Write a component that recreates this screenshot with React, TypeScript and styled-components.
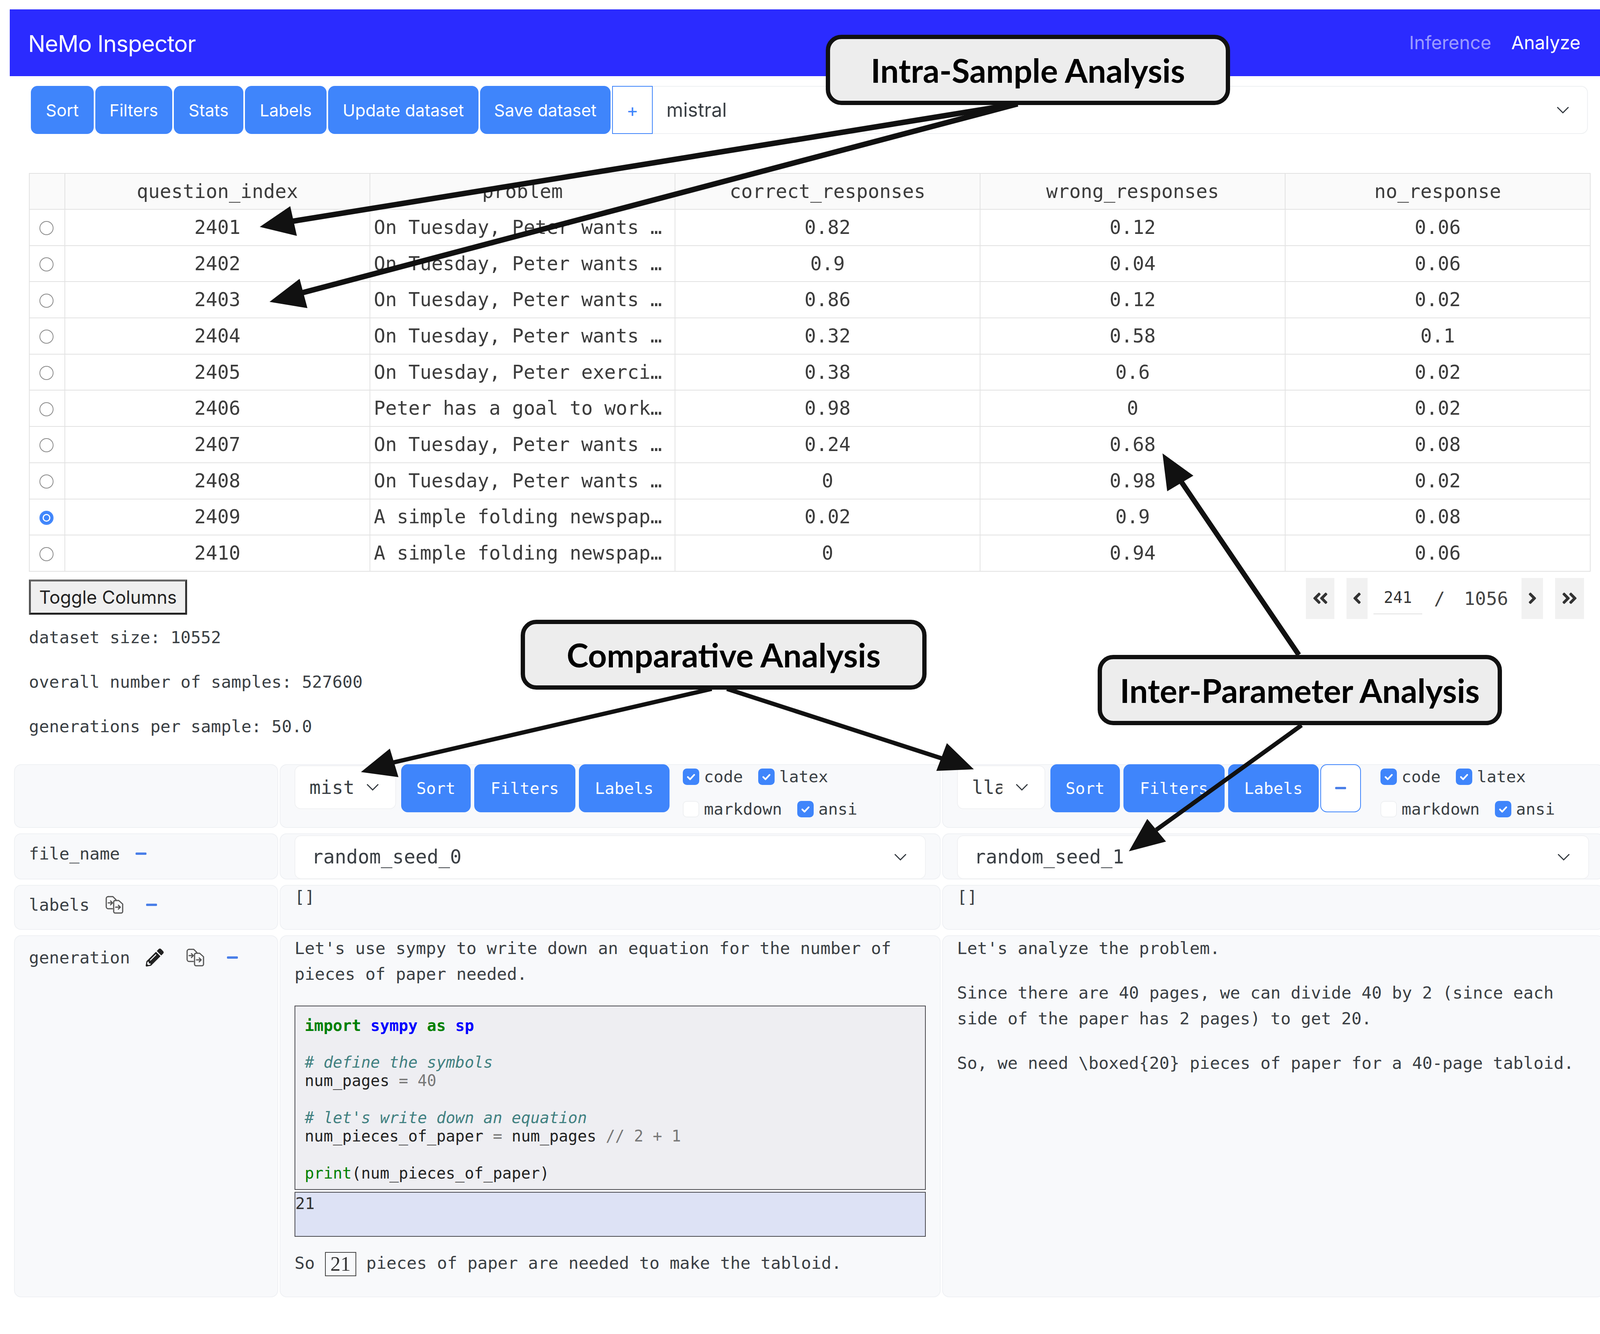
import React from "react";
import styled, { createGlobalStyle } from "styled-components";
import { FaAngleDoubleLeft, FaAngleDoubleRight, FaAngleLeft, FaAngleRight, FaPencilAlt } from "react-icons/fa";

const MONO = `"DejaVu Sans Mono", "Liberation Mono", monospace`;
const SANS = `Inter, "Liberation Sans", sans-serif`;
const BLUE = "#3f85fb";

const GlobalStyle = createGlobalStyle`
  html, body { margin: 0; padding: 0; background: #fff; }
  * { box-sizing: border-box; }
`;

const Page = styled.div`
  position: relative;
  width: 4140px;
  height: 3416px;
  padding-top: 24px;
  overflow: hidden;
  background: #fff;
  font-family: ${MONO};
  color: #3a3f44;
`;

const Navbar = styled.nav`
  display: flex;
  align-items: center;
  justify-content: space-between;
  height: 171px;
  margin: 0 30px 0 25px;
  padding: 0 64px 0 47px;
  background: #2b2bff;
  font-family: ${SANS};
`;
const Brand = styled.div`
  color: #fff;
  font-size: 58.5px;
  letter-spacing: -1px;
  margin-top: 4px;
`;
const NavLinks = styled.div`
  display: flex;
  gap: 51px;
  margin-top: -3px;
`;
const NavLink = styled.a<{ $active?: boolean }>`
  color: ${(p) => (p.$active ? "#fff" : "rgba(255,255,255,0.55)")};
  font-size: 47px;
`;

const Toolbar = styled.div`
  display: flex;
  height: 123px;
  margin: 25px 75px 0 79px;
  gap: 4px;
`;
const Button = styled.button<{ $w: number }>`
  flex: none;
  width: ${(p) => p.$w}px;
  height: 123px;
  padding: 0;
  border: 0;
  border-radius: 17px;
  background: ${BLUE};
  color: #fff;
  font-family: ${SANS};
  font-size: 43px;
  white-space: nowrap;
`;
const PlusButton = styled.button`
  flex: none;
  width: 104px;
  height: 123px;
  border: 2px solid ${BLUE};
  background: #fff;
  color: ${BLUE};
  font-family: ${SANS};
  font-size: 46px;
`;
const TopSelect = styled.div`
  flex: 1;
  display: flex;
  align-items: center;
  justify-content: space-between;
  margin-left: -4px;
  padding: 0 44px 0 35px;
  border: 2px solid #eef0f2;
  border-left: 0;
  border-radius: 0 17px 17px 0;
  font-family: ${SANS};
  font-size: 49px;
  color: #3a3f44;
`;
const Chevron = () => (
  <svg width="36" height="36" viewBox="0 0 16 16" fill="none" stroke="#343a40" strokeWidth="1.3" strokeLinecap="round">
    <path d="M2 5l6 6 6-6" />
  </svg>
);

const Table = styled.table`
  width: 3994px;
  margin: 100px 0 0 74px;
  border-collapse: collapse;
  table-layout: fixed;
  font-size: 49px;
  color: #3c3c3c;
`;
const HeadCell = styled.th<{ $narrow?: boolean }>`
  width: ${(p) => (p.$narrow ? "91px" : "781px")};
  height: 92px;
  padding: 0;
  border: 2px solid #e2e2e2;
  background: #fafafa;
  font-weight: 400;
  text-align: center;
`;
const Cell = styled.td<{ $left?: boolean }>`
  height: 92.7px;
  padding: 0 0 0 ${(p) => (p.$left ? "9px" : "0")};
  border: 2px solid #e2e2e2;
  text-align: ${(p) => (p.$left ? "left" : "center")};
  white-space: nowrap;
`;
const Radio = styled.input.attrs({ type: "radio" })`
  appearance: none;
  display: block;
  width: 36px;
  height: 36px;
  margin: 4px 0 0 25px;
  border: 2px solid #8b8b8b;
  border-radius: 50%;
  background: #fff;
  &:checked {
    border-color: ${BLUE};
    background: ${BLUE};
    box-shadow: inset 0 0 0 6px ${BLUE}, inset 0 0 0 9px #fff;
  }
`;

const TableFooter = styled.div`
  display: flex;
  justify-content: space-between;
  align-items: flex-start;
  height: 105px;
  margin-top: 16px;
  padding: 0 85px 0 74px;
`;
const ToggleButton = styled.button`
  width: 405px;
  height: 90px;
  margin-top: 4px;
  padding: 0;
  border: 5px solid;
  border-color: #666 #333 #222 #555;
  background: #efefef;
  color: #222;
  font-family: ${SANS};
  font-size: 46px;
`;
const Pager = styled.div`
  display: flex;
  align-items: center;
  height: 105px;
  font-size: 47px;
  color: #444;
`;
const PagerButton = styled.div<{ $w: number; $mr: number }>`
  display: flex;
  align-items: center;
  justify-content: center;
  width: ${(p) => p.$w}px;
  height: 105px;
  margin-right: ${(p) => p.$mr}px;
  background: #f1f1f1;
  color: #333;
  font-size: 46px;
`;
const PageInput = styled.div`
  width: 125px;
  height: 93px;
  margin: 0 30px 12px 0;
  padding-top: 27px;
  border-bottom: 2px solid #e0e0e0;
  text-align: center;
  font-size: 40px;
  color: #333;
`;
const PageTotal = styled.div`
  width: 224px;
  display: flex;
  justify-content: space-between;
  padding-right: 34px;
  white-space: nowrap;
`;

const Stats = styled.div`
  margin-top: 14px;
  padding-left: 74px;
  height: 358px;
`;
const Para = styled.p`
  margin: 0 0 48px;
  font-size: 43px;
  line-height: 66px;
`;

const CompareGrid = styled.div`
  display: grid;
  grid-template-columns: 676px 1692px 1694px;
  grid-template-rows: 163px 118px 115px 927px;
  column-gap: 4px;
  row-gap: 14px;
  margin-left: 36px;
`;
const Card = styled.div<{ $padTop?: number }>`
  padding: ${(p) => p.$padTop ?? 0}px 38px 0;
  box-shadow: inset 0 0 0 2px #eff1f4;
  border-radius: 18px;
  background: #f8f9fb;
  font-size: 43px;
  overflow: hidden;
`;
const ControlRow = styled(Card)`
  display: flex;
  align-items: flex-start;
`;
const ModelSelect = styled.div<{ $w: number }>`
  display: flex;
  align-items: center;
  flex: none;
  width: ${(p) => p.$w}px;
  height: 112px;
  margin: 3px 13px 0 0;
  padding: 0 40px 0 36px;
  justify-content: space-between;
  border: 2px solid #f0f1f3;
  border-radius: 16px;
  background: #fff;
  font-size: 48px;
`;
const ClipText = styled.span<{ $w: number }>`
  display: block;
  width: ${(p) => p.$w}px;
  overflow: hidden;
  white-space: nowrap;
`;
const MonoButton = styled(Button)`
  margin-right: 9px;
  font-family: ${MONO};
  font-size: 41.5px;
`;
const MinusButton = styled.button`
  flex: none;
  display: flex;
  align-items: center;
  justify-content: center;
  width: 104px;
  height: 123px;
  margin-left: -5px;
  border: 2px solid ${BLUE};
  border-radius: 17px;
  background: #fff;
  padding: 0;
`;
const MinusMark = styled.span`
  display: block;
  width: 28px;
  height: 6px;
  border-radius: 2px;
  background: #4a7fe8;
`;
const Checks = styled.div<{ $ml: number }>`
  flex: none;
  margin: 11px 0 0 ${(p) => p.$ml}px;
  font-size: 41.5px;
  line-height: 42px;
`;
const CheckRow = styled.div`
  display: flex;
  align-items: center;
  height: 42px;
  & + & {
    margin-top: 41px;
  }
`;
const Check = styled.label`
  display: flex;
  align-items: center;
  gap: 12px;
  margin-right: 39px;
`;
const Box = styled.span<{ $on?: boolean }>`
  display: flex;
  align-items: center;
  justify-content: center;
  width: 42px;
  height: 42px;
  border-radius: 10px;
  background: ${(p) => (p.$on ? BLUE : "#fff")};
  border: ${(p) => (p.$on ? "0" : "2px solid #eef0f2")};
`;
const CheckMark = () => (
  <svg width="26" height="26" viewBox="0 0 16 16" fill="none" stroke="#fff" strokeWidth="2.6" strokeLinecap="round" strokeLinejoin="round">
    <path d="M3 8.5l3.5 3.5L13 5" />
  </svg>
);
const Option = ({ on, children }: { on?: boolean; children: React.ReactNode }) => (
  <Check>
    <Box $on={on}>{on && <CheckMark />}</Box>
    {children}
  </Check>
);

const FieldSelect = styled.div`
  display: flex;
  align-items: center;
  justify-content: space-between;
  height: 112px;
  margin-top: 5px;
  padding: 0 45px 0 42px;
  border: 2px solid #f0f1f3;
  border-radius: 16px;
  background: #fff;
  font-size: 49px;
`;
const Brackets = styled.div`
  margin-top: 1px;
  font-size: 43px;
  line-height: 60px;
`;

const LabelRow = styled.div`
  display: flex;
  align-items: center;
  height: 66px;
`;
const LabelText = styled.span`
  margin-right: 40px;
`;
const IconSlot = styled.span`
  display: flex;
  align-items: center;
  color: #222;
  & + & {
    margin-left: 57px;
  }
`;
const CopyIcon = () => (
  <svg width="48" height="46" viewBox="0 0 48 46" fill="none" stroke="#555" strokeWidth="3" strokeLinejoin="round" strokeLinecap="round">
    <path d="M8 2h12l8 8v12" />
    <path d="M8 2a5 5 0 0 0-5 5v21a5 5 0 0 0 5 5h11" />
    <path d="M8 18h11M14 13l5 5-5 5" />
    <path d="M25 12h10l10 9v19a4 4 0 0 1-4 4H26a4 4 0 0 1-4-4V16a4 4 0 0 1 3-4z" fill="#f8f9fb" />
    <path d="M27 29h12M34 24l5 5-5 5" />
  </svg>
);

const CodeBox = styled.pre`
  margin: 0;
  height: 472px;
  padding: 26px 24px 0;
  border: 2px solid #4a4a4f;
  background: #eeeef2;
  font-family: ${MONO};
  font-size: 40px;
  line-height: 47.2px;
  color: #222;
`;
const Keyword = styled.span`
  color: #008000;
  font-weight: 700;
`;
const Module = styled.span`
  color: #0000ff;
  font-weight: 700;
`;
const Comment = styled.span`
  color: #408080;
  font-style: italic;
`;
const Operator = styled.span`
  color: #777;
`;
const Builtin = styled.span`
  color: #008000;
`;
const OutputBox = styled.pre`
  margin: 5px 0 34px;
  height: 115px;
  padding: 0;
  border: 2px solid #4a4a4f;
  background: #dde2f5;
  font-family: ${MONO};
  font-size: 41px;
  line-height: 56px;
  color: #333;
`;
const Boxed = styled.span`
  display: inline-block;
  width: 80px;
  height: 62px;
  border: 2px solid #444;
  text-align: center;
  vertical-align: middle;
  font-family: "Liberation Serif", serif;
  font-size: 52px;
  line-height: 58px;
  color: #333;
`;

const Overlay = styled.svg`
  position: absolute;
  left: 0;
  top: 0;
  pointer-events: none;
`;
const Callout = styled.div<{ $x: number; $y: number; $w: number; $h: number }>`
  position: absolute;
  left: ${(p) => p.$x}px;
  top: ${(p) => p.$y}px;
  width: ${(p) => p.$w}px;
  height: ${(p) => p.$h}px;
  display: flex;
  align-items: center;
  justify-content: center;
  border: 11px solid #111;
  border-radius: 40px;
  background: #ededed;
  color: #000;
  font-family: Lato, "Open Sans", sans-serif;
  font-weight: 700;
  font-size: 84px;
  white-space: nowrap;
`;

const rows = [
  ["2401", "On Tuesday, Peter wants …", "0.82", "0.12", "0.06"],
  ["2402", "On Tuesday, Peter wants …", "0.9", "0.04", "0.06"],
  ["2403", "On Tuesday, Peter wants …", "0.86", "0.12", "0.02"],
  ["2404", "On Tuesday, Peter wants …", "0.32", "0.58", "0.1"],
  ["2405", "On Tuesday, Peter exerci…", "0.38", "0.6", "0.02"],
  ["2406", "Peter has a goal to work…", "0.98", "0", "0.02"],
  ["2407", "On Tuesday, Peter wants …", "0.24", "0.68", "0.08"],
  ["2408", "On Tuesday, Peter wants …", "0", "0.98", "0.02"],
  ["2409", "A simple folding newspap…", "0.02", "0.9", "0.08"],
  ["2410", "A simple folding newspap…", "0", "0.94", "0.06"],
];
const headers = ["question_index", "problem", "correct_responses", "wrong_responses", "no_response"];

// line + head, all in page pixels
const arrows = [
  { from: "2605,266 740,568", head: "665,581 743,528 760,604", w: 14 },
  { from: "2605,266 765,752", head: "690,773 767,714 787,789", w: 14 },
  { from: "1822,1764 1000,1954", head: "924,1977 998,1917 1020,1990", w: 11 },
  { from: "1861,1764 2420,1945", head: "2493,1970 2424,1903 2397,1974", w: 11 },
  { from: "3332,1857 2960,2125", head: "2890,2180 2937,2097 2985,2155", w: 11 },
  { from: "3325,1677 3025,1235", head: "2976,1161 3055,1218 2988,1258", w: 13 },
];

export default function App() {
  return (
    <Page>
      <GlobalStyle />
      <Navbar>
        <Brand>NeMo Inspector</Brand>
        <NavLinks>
          <NavLink>Inference</NavLink>
          <NavLink $active>Analyze</NavLink>
        </NavLinks>
      </Navbar>

      <Toolbar>
        <Button $w={161}>Sort</Button>
        <Button $w={197}>Filters</Button>
        <Button $w={178}>Stats</Button>
        <Button $w={209}>Labels</Button>
        <Button $w={385}>Update dataset</Button>
        <Button $w={334}>Save dataset</Button>
        <PlusButton>+</PlusButton>
        <TopSelect>
          mistral
          <Chevron />
        </TopSelect>
      </Toolbar>

      <Table>
        <thead>
          <tr>
            <HeadCell $narrow />
            {headers.map((h) => (
              <HeadCell key={h}>{h}</HeadCell>
            ))}
          </tr>
        </thead>
        <tbody>
          {rows.map((r) => (
            <tr key={r[0]}>
              <Cell $left={false}>
                <Radio name="row" defaultChecked={r[0] === "2409"} />
              </Cell>
              {r.map((c, i) => (
                <Cell key={i} $left={i === 1}>
                  {c}
                </Cell>
              ))}
            </tr>
          ))}
        </tbody>
      </Table>

      <TableFooter>
        <ToggleButton>Toggle Columns</ToggleButton>
        <Pager>
          <PagerButton $w={73} $mr={31}><FaAngleDoubleLeft /></PagerButton>
          <PagerButton $w={54} $mr={15}><FaAngleLeft /></PagerButton>
          <PageInput>241</PageInput>
          <PageTotal>
            <span>/</span>
            <span>1056</span>
          </PageTotal>
          <PagerButton $w={55} $mr={31}><FaAngleRight /></PagerButton>
          <PagerButton $w={74} $mr={0}><FaAngleDoubleRight /></PagerButton>
        </Pager>
      </TableFooter>

      <Stats>
        <Para>dataset size: 10552</Para>
        <Para>overall number of samples: 527600</Para>
        <Para>generations per sample: 50.0</Para>
      </Stats>

      <CompareGrid>
        <Card />
        <ControlRow>
          <ModelSelect $w={260}>
            <ClipText $w={116}>mist</ClipText>
            <Chevron />
          </ModelSelect>
          <MonoButton $w={178}>Sort</MonoButton>
          <MonoButton $w={259}>Filters</MonoButton>
          <MonoButton $w={232}>Labels</MonoButton>
          <Checks $ml={25}>
            <CheckRow>
              <Option on>code</Option>
              <Option on>latex</Option>
            </CheckRow>
            <CheckRow>
              <Option>markdown</Option>
              <Option on>ansi</Option>
            </CheckRow>
          </Checks>
        </ControlRow>
        <ControlRow>
          <ModelSelect $w={226}>
            <ClipText $w={78}>llama</ClipText>
            <Chevron />
          </ModelSelect>
          <MonoButton $w={178}>Sort</MonoButton>
          <MonoButton $w={259}>Filters</MonoButton>
          <MonoButton $w={232}>Labels</MonoButton>
          <MinusButton><MinusMark /></MinusButton>
          <Checks $ml={50}>
            <CheckRow>
              <Option on>code</Option>
              <Option on>latex</Option>
            </CheckRow>
            <CheckRow>
              <Option>markdown</Option>
              <Option on>ansi</Option>
            </CheckRow>
          </Checks>
        </ControlRow>

        <Card $padTop={19}>
          <LabelRow>
            <LabelText>file_name</LabelText>
            <IconSlot><MinusMark /></IconSlot>
          </LabelRow>
        </Card>
        <Card>
          <FieldSelect>
            random_seed_0
            <Chevron />
          </FieldSelect>
        </Card>
        <Card>
          <FieldSelect>
            random_seed_1
            <Chevron />
          </FieldSelect>
        </Card>

        <Card $padTop={18}>
          <LabelRow>
            <LabelText>labels</LabelText>
            <IconSlot><CopyIcon /></IconSlot>
            <IconSlot><MinusMark /></IconSlot>
          </LabelRow>
        </Card>
        <Card><Brackets>[]</Brackets></Card>
        <Card><Brackets>[]</Brackets></Card>

        <Card $padTop={24}>
          <LabelRow>
            <LabelText>generation</LabelText>
            <IconSlot><FaPencilAlt size={46} /></IconSlot>
            <IconSlot><CopyIcon /></IconSlot>
            <IconSlot><MinusMark /></IconSlot>
          </LabelRow>
        </Card>
        <Card>
          <Para>Let's use sympy to write down an equation for the number of pieces of paper needed.</Para>
          <CodeBox>
            <Keyword>import</Keyword> <Module>sympy</Module> <Keyword>as</Keyword> <Module>sp</Module>
            {"\n\n"}
            <Comment># define the symbols</Comment>
            {"\nnum_pages "}<Operator>= 40</Operator>
            {"\n\n"}
            <Comment># let's write down an equation</Comment>
            {"\nnum_pieces_of_paper "}<Operator>=</Operator>{" num_pages "}<Operator>// 2 + 1</Operator>
            {"\n\n"}
            <Builtin>print</Builtin>(num_pieces_of_paper)
          </CodeBox>
          <OutputBox>21</OutputBox>
          <Para>So <Boxed>21</Boxed> pieces of paper are needed to make the tabloid.</Para>
        </Card>
        <Card>
          <Para>Let's analyze the problem.</Para>
          <Para>Since there are 40 pages, we can divide 40 by 2 (since each side of the paper has 2 pages) to get 20.</Para>
          <Para>So, we need \boxed{"{20}"} pieces of paper for a 40-page tabloid.</Para>
        </Card>
      </CompareGrid>

      <Overlay width={4140} height={3416} viewBox="0 0 4140 3416">
        {arrows.map((a) => (
          <g key={a.head}>
            <polyline points={a.from} fill="none" stroke="#111" strokeWidth={a.w} />
            <polygon points={a.head} fill="#111" />
          </g>
        ))}
      </Overlay>
      <Callout $x={2114} $y={89} $w={1035} $h={180}>Intra-Sample Analysis</Callout>
      <Callout $x={1333} $y={1587} $w={1039} $h={179}>Comparative Analysis</Callout>
      <Callout $x={2810} $y={1677} $w={1035} $h={180}>Inter-Parameter Analysis</Callout>
    </Page>
  );
}
